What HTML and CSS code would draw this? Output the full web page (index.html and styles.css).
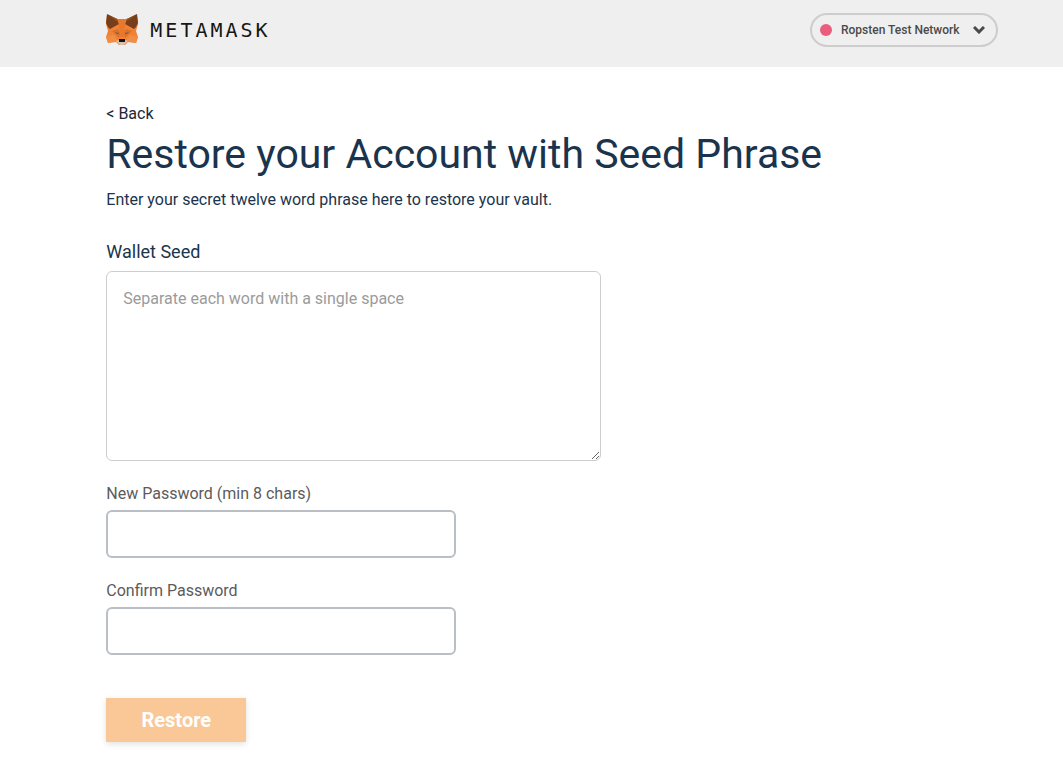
FILE: index.html
```html
<!DOCTYPE html>
<html lang="en">
<head>
    <meta charset="UTF-8">
    <meta name="viewport" content="width=device-width, initial-scale=1.0">
    <title>MetaMask</title>
    <link rel="stylesheet" href="styles.css">
</head>
<body>
<header class="app-header">
    <div class="logo">
        <svg class="logo-fox" viewBox="0 0 32 32" aria-hidden="true">
            <path fill="#ef8236" d="M1 1l11 4h8l11-4 1 9-2 7 2 6-2 6-8-1-3 3h-6l-3-3-8 1-2-6 2-6-2-7z"/>
            <path fill="#763e1a" d="M1 0l10 5 2 5-9 5-2-2-2-4zM31 0L21 5l-2 5 9 5 2-2 2-4z"/>
            <path fill="#9a4f20" d="M1 0l10 5 1 3zM31 0L21 5l-1 3z"/>
            <path fill="#e8792c" d="M12 5h8l-1 6-1 12h-4l-1-12z"/>
            <path fill="#dd7029" d="M6 17l6-2 2 4-1 5zM26 17l-6-2-2 4 1 5z"/>
            <path fill="#f28d45" d="M0 23l8-2 4 6-10 2zM32 23l-8-2-4 6 10 2z"/>
            <path fill="#6d625c" d="M9 18l4 1v1h-2zM23 18l-4 1v1h2z"/>
            <path fill="#d7c1b3" d="M10 27l3-1h6l3 1-4 4h-4z"/>
            <path fill="#161616" d="M13 25h6v3h-6z"/>
        </svg>
        <span class="logo-text">METAMASK</span>
    </div>
    <div class="network">
        <span class="network-dot"></span>
        <select class="network-select" aria-label="Network">
            <option>Ropsten Test Network</option>
        </select>
        <svg class="network-arrow" viewBox="0 0 12 8" aria-hidden="true">
            <path fill="none" stroke="#4a4a4a" stroke-width="3" d="M1 1l5 5 5-5"/>
        </svg>
    </div>
</header>
<main class="restore">
    <a class="back" href="#">&lt; Back</a>
    <h1 class="title">Restore your Account with Seed Phrase</h1>
    <p class="description">Enter your secret twelve word phrase here to restore your vault.</p>
    <form class="restore-form">
        <div class="field">
            <label class="label label-seed" for="seed">Wallet Seed</label>
            <textarea class="seed" id="seed" placeholder="Separate each word with a single space"></textarea>
        </div>
        <div class="field">
            <label class="label" for="password">New Password (min 8 chars)</label>
            <input class="password" type="password" id="password">
        </div>
        <div class="field">
            <label class="label" for="confirmPassword">Confirm Password</label>
            <input class="password" type="password" id="confirmPassword">
        </div>
        <button class="submit" type="submit" disabled>Restore</button>
    </form>
</main>
</body>
</html>
```

FILE: styles.css
```css
* {
    box-sizing: border-box;
}
body {
    margin: 0;
    background: #fff;
    color: #1b344d;
    font-family: Roboto, sans-serif;
    font-size: 16px;
    line-height: 20px;
}
.app-header {
    display: flex;
    justify-content: space-between;
    align-items: center;
    padding: 13px 65px 20px 10%;
    background: #efefef;
}
.logo {
    display: flex;
    align-items: center;
    gap: 12px;
}
.logo-fox {
    width: 32px;
    height: 32px;
}
.logo-text {
    color: #161616;
    font-family: "DejaVu Sans Mono", monospace;
    font-size: 20px;
    letter-spacing: 3px;
}
.network {
    display: flex;
    align-items: center;
    position: relative;
    height: 34px;
    padding: 0 12px 0 8px;
    border: 2px solid #cdcdcd;
    border-radius: 17px;
}
.network-dot {
    width: 12px;
    height: 12px;
    border-radius: 50%;
    background: #e85e7c;
}
.network-select {
    appearance: none;
    margin: 0;
    padding: 0 24px 0 9px;
    border: none;
    background: none;
    color: #4a4a4a;
    font: 500 12px Roboto, sans-serif;
}
.network-arrow {
    position: absolute;
    right: 11px;
    width: 12px;
    height: 8px;
    pointer-events: none;
}
.restore {
    padding: 37px 10%;
}
.back {
    color: #1b2736;
    text-decoration: none;
}
.title {
    margin: 6px 0 12px;
    font-size: 41px;
    font-weight: 400;
    line-height: 48px;
}
.description {
    margin: 0 0 30px;
}
.restore-form {
    display: flex;
    flex-direction: column;
    align-items: flex-start;
    gap: 23px;
}
.field {
    display: flex;
    flex-direction: column;
    align-items: flex-start;
    gap: 7px;
    width: 100%;
}
.label {
    color: #5b5b5b;
    line-height: 19px;
}
.label-seed {
    color: #1b344d;
    font-size: 18px;
    line-height: 24px;
}
.seed {
    width: 100%;
    max-width: 495px;
    height: 190px;
    padding: 17px 16px;
    border: 1px solid #cdcdcd;
    border-radius: 6px;
    background: #fff;
    font: 16px/20px Roboto, sans-serif;
}
.seed::placeholder {
    color: #9b9b9b;
}
.password {
    width: 100%;
    max-width: 350px;
    height: 48px;
    padding: 0 14px;
    border: 2px solid #babfc5;
    border-radius: 6px;
    background: #fff;
    font: 16px Roboto, sans-serif;
}
.submit {
    width: 140px;
    height: 44px;
    margin-top: 20px;
    padding: 0;
    border: none;
    background: #fac796;
    box-shadow: 0 2px 6px rgba(0, 0, 0, 0.12);
    color: #fff;
    font: 700 20px Roboto, sans-serif;
}
```
